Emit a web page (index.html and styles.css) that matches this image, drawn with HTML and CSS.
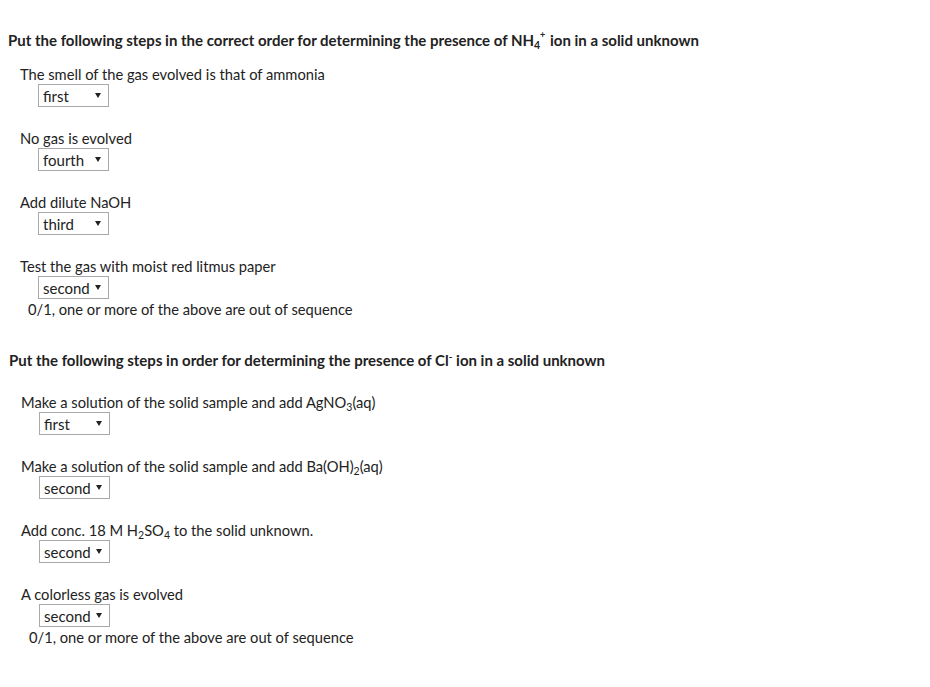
FILE: index.html
```html
<!DOCTYPE html>
<html>
<head>
<meta charset="utf-8">
<link rel="stylesheet" href="styles.css">
</head>
<body>
<div class="page">
  <section class="question q1">
    <h2 class="title">Put the following steps in the correct order for determining the presence of NH<span class="ion"><span class="ion-sub">4</span><span class="ion-sup">+</span></span> ion in a solid unknown</h2>
    <div class="items">
      <div class="item">
        <div class="label">The smell of the gas evolved is that of ammonia</div>
        <div class="select"><span class="val">first</span><svg class="arrow" width="6" height="5" viewBox="0 0 6 5"><polygon points="0,0 6,0 3,5" fill="#222"/></svg></div>
      </div>
      <div class="item">
        <div class="label">No gas is evolved</div>
        <div class="select"><span class="val">fourth</span><svg class="arrow" width="6" height="5" viewBox="0 0 6 5"><polygon points="0,0 6,0 3,5" fill="#222"/></svg></div>
      </div>
      <div class="item">
        <div class="label">Add dilute NaOH</div>
        <div class="select"><span class="val">third</span><svg class="arrow" width="6" height="5" viewBox="0 0 6 5"><polygon points="0,0 6,0 3,5" fill="#222"/></svg></div>
      </div>
      <div class="item last">
        <div class="label">Test the gas with moist red litmus paper</div>
        <div class="select"><span class="val">second</span><svg class="arrow" width="6" height="5" viewBox="0 0 6 5"><polygon points="0,0 6,0 3,5" fill="#222"/></svg></div>
      </div>
      <div class="result">0/1, one or more of the above are out of sequence</div>
    </div>
  </section>
  <section class="question q2">
    <h2 class="title">Put the following steps in order for determining the presence of Cl<sup class="minus">-</sup> ion in a solid unknown</h2>
    <div class="items">
      <div class="item">
        <div class="label">Make a solution of the solid sample and add AgNO<sub>3</sub>(aq)</div>
        <div class="select"><span class="val">first</span><svg class="arrow" width="6" height="5" viewBox="0 0 6 5"><polygon points="0,0 6,0 3,5" fill="#222"/></svg></div>
      </div>
      <div class="item">
        <div class="label">Make a solution of the solid sample and add Ba(OH)<sub>2</sub>(aq)</div>
        <div class="select"><span class="val">second</span><svg class="arrow" width="6" height="5" viewBox="0 0 6 5"><polygon points="0,0 6,0 3,5" fill="#222"/></svg></div>
      </div>
      <div class="item">
        <div class="label">Add conc. 18 M H<sub>2</sub>SO<sub>4</sub> to the solid unknown.</div>
        <div class="select"><span class="val">second</span><svg class="arrow" width="6" height="5" viewBox="0 0 6 5"><polygon points="0,0 6,0 3,5" fill="#222"/></svg></div>
      </div>
      <div class="item last">
        <div class="label">A colorless gas is evolved</div>
        <div class="select"><span class="val">second</span><svg class="arrow" width="6" height="5" viewBox="0 0 6 5"><polygon points="0,0 6,0 3,5" fill="#222"/></svg></div>
      </div>
      <div class="result">0/1, one or more of the above are out of sequence</div>
    </div>
  </section>
</div>
</body>
</html>
```
FILE: styles.css
```css
html, body {
  margin: 0;
  padding: 0;
  background: #ffffff;
}
body {
  font-family: Lato, "Liberation Sans", sans-serif;
  font-size: 14.7px;
  color: #222222;
}
.page {
  display: flex;
  flex-direction: column;
  padding: 30px 0 0 8px;
}
.question {
  display: flex;
  flex-direction: column;
}
.q2 {
  margin-top: 31px;
  padding-left: 1px;
}
.title {
  margin: 0;
  font-size: 15px;
  font-weight: 700;
  line-height: 20px;
  height: 20px;
  white-space: nowrap;
  color: #222222;
}
.title sub, .label sub {
  font-size: 10.5px;
  line-height: 0;
  vertical-align: -3px;
}
.ion {
  display: inline-flex;
  align-items: flex-start;
  margin-right: 1px;
}
.ion-sub {
  font-size: 10.5px;
  line-height: 0;
  position: relative;
  top: 3px;
}
.ion-sup {
  font-size: 9px;
  line-height: 0;
  position: relative;
  top: -7px;
}
.title sup.minus {
  font-size: 10px;
  line-height: 0;
  vertical-align: 6px;
}
.items {
  display: flex;
  flex-direction: column;
  padding-left: 12px;
}
.q1 .items {
  margin-top: 14px;
}
.q2 .items {
  margin-top: 22px;
}
.item {
  display: flex;
  flex-direction: column;
  align-items: flex-start;
  margin-bottom: 21px;
}
.item.last {
  margin-bottom: 0;
}
.label {
  line-height: 20px;
  height: 20px;
  white-space: nowrap;
}
.select {
  margin-left: 18px;
  box-sizing: border-box;
  width: 71px;
  height: 23px;
  border: 1px solid #a9a9a9;
  background: #ffffff;
  display: flex;
  align-items: center;
  justify-content: space-between;
  padding: 0 7px 0 4px;
  font-size: 15px;
  color: #222222;
}
.select .arrow {
  display: block;
  flex: none;
}
.result {
  margin-left: 8px;
  line-height: 20px;
  height: 20px;
  white-space: nowrap;
}
```
